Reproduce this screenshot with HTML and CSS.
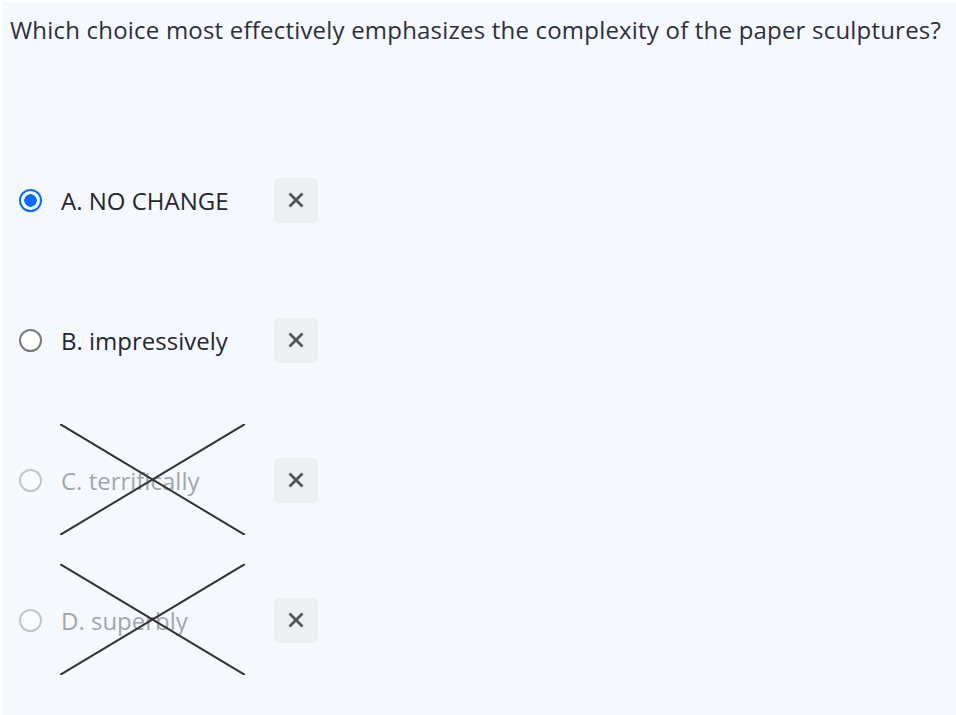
FILE: index.html
```html
<!DOCTYPE html>
<html lang="en">
<head>
    <meta charset="UTF-8">
    <meta name="viewport" content="width=device-width, initial-scale=1.0">
    <title>Question</title>
    <link rel="stylesheet" href="styles.css">
</head>
<body>
    <div class="question">
        <p class="prompt">Which choice most effectively emphasizes the complexity of the paper sculptures?</p>

        <div class="choices">
            <div class="choice">
                <label class="option">
                    <span class="radio checked"></span>
                    <span class="text">A. NO CHANGE</span>
                </label>
                <button class="strike-btn" aria-label="Eliminate A">
                    <svg viewBox="0 0 18 18" width="18" height="18"><path d="M2.5 2.5 L15.5 15.5 M15.5 2.5 L2.5 15.5" /></svg>
                </button>
            </div>

            <div class="choice">
                <label class="option">
                    <span class="radio"></span>
                    <span class="text">B. impressively</span>
                </label>
                <button class="strike-btn" aria-label="Eliminate B">
                    <svg viewBox="0 0 18 18" width="18" height="18"><path d="M2.5 2.5 L15.5 15.5 M15.5 2.5 L2.5 15.5" /></svg>
                </button>
            </div>

            <div class="choice eliminated">
                <label class="option">
                    <span class="radio"></span>
                    <span class="text">C. terrifically</span>
                </label>
                <svg class="cross" viewBox="0 0 185 111" preserveAspectRatio="none"><path d="M0 0 L185 111 M185 0 L0 111" /></svg>
                <button class="strike-btn" aria-label="Restore C">
                    <svg viewBox="0 0 18 18" width="18" height="18"><path d="M2.5 2.5 L15.5 15.5 M15.5 2.5 L2.5 15.5" /></svg>
                </button>
            </div>

            <div class="choice eliminated">
                <label class="option">
                    <span class="radio"></span>
                    <span class="text">D. superbly</span>
                </label>
                <svg class="cross" viewBox="0 0 185 111" preserveAspectRatio="none"><path d="M0 0 L185 111 M185 0 L0 111" /></svg>
                <button class="strike-btn" aria-label="Restore D">
                    <svg viewBox="0 0 18 18" width="18" height="18"><path d="M2.5 2.5 L15.5 15.5 M15.5 2.5 L2.5 15.5" /></svg>
                </button>
            </div>
        </div>
    </div>
</body>
</html>
```

FILE: styles.css
```css
html, body {
    margin: 0;
    padding: 0;
}
body {
    background-color: #ffffff;
    min-height: 100vh;
}
.question {
    background-color: #f5f9fd;
    margin: 2px 0 0 2px;
    min-height: calc(100vh - 2px);
    padding: 0 0 0 8px;
    box-sizing: border-box;
}
.prompt {
    font-family: 'Open Sans', sans-serif;
    font-size: 24px;
    letter-spacing: 0.2px;
    color: #2f2f3a;
    margin: 0;
    height: 128px;
    padding-top: 13px;
    box-sizing: border-box;
    line-height: 30px;
    white-space: nowrap;
}
.choices {
    display: flex;
    flex-direction: column;
}
.choice {
    position: relative;
    height: 140px;
    display: flex;
    align-items: center;
}
.option {
    display: flex;
    align-items: center;
    width: 264px;
    padding-left: 9px;
    box-sizing: border-box;
}
.radio {
    width: 19px;
    height: 19px;
    border: 2px solid #7a7a7a;
    border-radius: 50%;
    background: #ffffff;
    flex-shrink: 0;
}
.radio.checked {
    border-color: #0a6cff;
    background: radial-gradient(circle, #0a6cff 0 6px, #ffffff 6.5px);
}
.text {
    font-family: 'Open Sans', sans-serif;
    font-size: 24px;
    color: #262630;
    margin-left: 19px;
}
.eliminated .radio,
.eliminated .text {
    opacity: 0.4;
}
.strike-btn {
    width: 44px;
    height: 45px;
    border: none;
    border-radius: 5px;
    background-color: #edf0f3;
    display: flex;
    align-items: center;
    justify-content: center;
    padding: 0;
    cursor: pointer;
}
.strike-btn svg path {
    stroke: #555555;
    stroke-width: 2.8;
    fill: none;
}
.cross {
    position: absolute;
    left: 50px;
    top: 14px;
    width: 185px;
    height: 111px;
    pointer-events: none;
}
.cross path {
    stroke: #333333;
    stroke-width: 2;
    fill: none;
}
```
